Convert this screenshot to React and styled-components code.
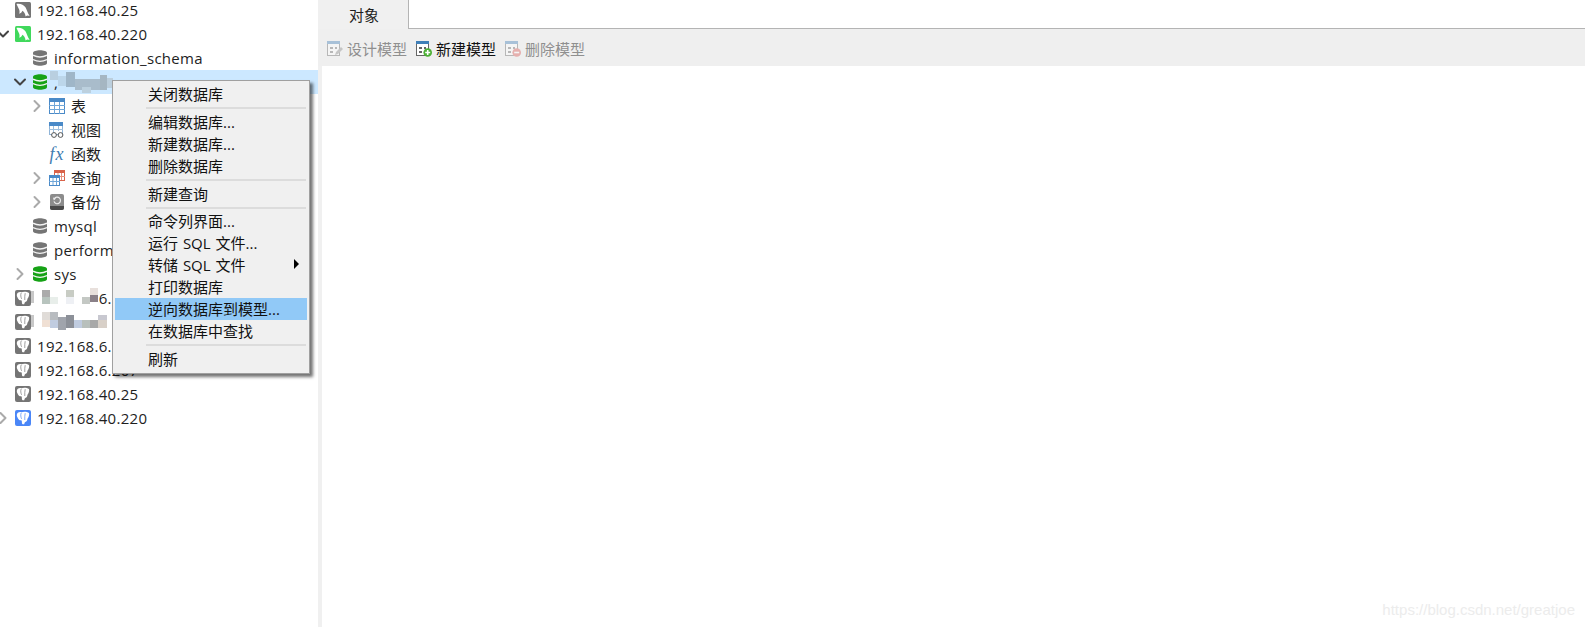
import styled, { createGlobalStyle } from "styled-components";
import { ChevronRight, ChevronDown } from "lucide-react";

const GlobalStyle = createGlobalStyle`
	html, body {
		margin: 0;
		padding: 0;
		background: #fff;
		overflow: hidden;
	}
	body {
		font-family: "Open Sans", "Noto Sans CJK SC", sans-serif;
		font-size: 15px;
		color: #1e1e1e;
	}
`;

const Page = styled.div`
	position: relative;
	display: flex;
	width: 1585px;
	height: 627px;
	overflow: hidden;
`;

const Sidebar = styled.div`
	position: relative;
	width: 318px;
	flex-shrink: 0;
	overflow: hidden;
`;

const Tree = styled.div`
	display: flex;
	flex-direction: column;
	margin-top: -2px;
`;

const Row = styled.div`
	display: flex;
	align-items: center;
	height: 24px;
	white-space: nowrap;
	background: ${(props) => (props.$selected ? "#cce8ff" : "transparent")};
`;

const ArrowSlot = styled.div`
	display: flex;
	align-items: center;
	flex-shrink: 0;
	width: ${(props) => [15, 32, 49][props.$level]}px;
	color: ${(props) => (props.$open ? "#444" : "#aaa")};

	svg {
		flex-shrink: 0;
		margin-left: ${(props) => 17 * props.$level - 7.5}px;
	}
`;

const IconBox = styled.div`
	display: flex;
	align-items: center;
	justify-content: center;
	width: 16px;
	height: 16px;
	flex-shrink: 0;
	margin-right: 6px;
`;

const Label = styled.span`
	letter-spacing: ${(props) => (props.$cjk ? 0 : 0.3)}px;
	margin-bottom: ${(props) => (props.$cjk ? 2 : 0)}px;
`;

const FxMark = styled.span`
	font-family: "Liberation Serif", serif;
	font-style: italic;
	font-size: 18px;
	line-height: 16px;
	letter-spacing: 1px;
	color: #3f7cb0;
`;

const Mosaic = styled.svg`
	position: absolute;
	left: 0;
	top: 0;
`;

const Main = styled.div`
	flex: 1;
	display: flex;
	flex-direction: column;
	background: #f0f0f0;
`;

const TabBar = styled.div`
	display: flex;
	height: 28px;
	background: #fff;
	border-bottom: 1px solid #b4b4b4;
`;

const Tab = styled.div`
	width: 91px;
	background: #f0f0f0;
	border-right: 1px solid #b4b4b4;
	margin-bottom: -1px;
	display: flex;
	align-items: center;
	justify-content: center;
	padding-left: 2px;
	box-sizing: border-box;
`;

const Toolbar = styled.div`
	display: flex;
	align-items: center;
	box-sizing: border-box;
	height: 37px;
	padding: 2px 0 0 9px;
	background: #efefef;
	gap: 9px;
`;

const ToolButton = styled.div`
	display: flex;
	align-items: center;
	gap: 4px;
	color: ${(props) => (props.$disabled ? "#8f8f8f" : "#111")};
`;

const ToolIcon = styled.svg`
	opacity: ${(props) => (props.$disabled ? 0.4 : 1)};
`;

const Content = styled.div`
	flex: 1;
	margin-left: 4px;
	background: #fff;
`;

const Menu = styled.div`
	position: absolute;
	left: 112px;
	top: 80px;
	width: 198px;
	box-sizing: border-box;
	padding: 2px 2px 3px;
	background: #f0f0f0;
	border: 1px solid #a0a0a0;
	box-shadow: 3px 3px 3px rgba(0, 0, 0, 0.55);
`;

const MenuItem = styled.div`
	position: relative;
	height: 22px;
	line-height: 22px;
	padding-left: 33px;
	white-space: nowrap;
	word-spacing: 1px;
	color: #111;
	background: ${(props) => (props.$active ? "#91c9f7" : "transparent")};
`;

const SubArrow = styled.span`
	position: absolute;
	right: 8px;
	top: 5px;
	width: 0;
	height: 0;
	border-left: 5px solid #000;
	border-top: 5px solid transparent;
	border-bottom: 5px solid transparent;
`;

const MenuSeparator = styled.div`
	height: 2px;
	margin: 2px 1px ${(props) => (props.$tight ? 1 : 2)}px 31px;
	background: #dcdcdc;
`;

const Watermark = styled.div`
	position: absolute;
	right: 10px;
	bottom: 9px;
	font-family: "Liberation Sans", sans-serif;
	font-size: 15px;
	color: #ececec;
`;

const MysqlIcon = ({ color }) => (
	<svg width="16" height="16" viewBox="0 0 16 16">
		<rect width="16" height="16" rx="1.5" fill={color} />
		<path
			d="M1.5 2C5.5 1.4 8.8 3 10.6 5.6C11.8 7.6 12.4 10.6 14.6 14C13.2 13.4 12 13.2 10.6 14.4C10.2 12 9.2 9.8 7.4 8.8C6.8 10.4 5.8 11.2 4.2 11.8C4.8 10 4.6 8.6 4 7.2C3.2 5.4 2.4 4 1.5 2Z"
			fill="#fff"
		/>
	</svg>
);

const PgIcon = ({ color }) => (
	<svg width="16" height="16" viewBox="0 0 16 16">
		<rect width="16" height="16" rx="2" fill={color} />
		<path
			d="M1.8 5C1.8 2.6 4.4 1.6 6.5 2.3C8.4 1.4 12 1.6 14 3C14.6 5.2 13.6 7.2 12.6 8.6C12.2 10 12.2 11.4 10.8 11.8C9.8 12 9.7 13 9.2 14.2C7.8 14.6 6.8 13.8 6.9 12.4C6.9 11 6.7 10.4 6.2 10.2C5 10.4 3.8 9.8 3 8.4C2.4 7.4 1.8 6.2 1.8 5Z"
			fill="#fff"
		/>
		<path d="M6.2 2.8C5.4 5 5.8 7 6.6 8.8M10.2 3.2C9.6 5.4 9.8 7.4 9.8 10" stroke={color} strokeWidth="0.7" fill="none" />
	</svg>
);

const DbIcon = ({ color }) => (
	<svg width="14" height="16" viewBox="0 0 14 16">
		<path d="M0 3C0 -0.6 14 -0.6 14 3V13C14 16.6 0 16.6 0 13Z" fill={color} />
		<path d="M0 5.2Q7 8.8 14 5.2M0 9.6Q7 13.2 14 9.6" stroke="#f4f4f4" strokeWidth="1.3" fill="none" />
	</svg>
);

const TableIcon = () => (
	<svg width="16" height="16" viewBox="0 0 16 16">
		<rect x="0.5" y="0.5" width="15" height="15" fill="#fff" stroke="#4a8ac8" />
		<rect x="0" y="0" width="16" height="4" fill="#4a8ac8" />
		<path d="M5.5 4V16M10.5 4V16M0 7.5H16M0 11.5H16" stroke="#6fa6d8" />
	</svg>
);

const ViewIcon = () => (
	<svg width="16" height="16" viewBox="0 0 16 16">
		<rect x="0.5" y="0.5" width="13" height="12" fill="#fff" stroke="#8fb4d8" />
		<rect x="0" y="0" width="14" height="4" fill="#4a8ac8" />
		<path d="M4.5 4V12M9.5 4V9M0 7.5H14" stroke="#9fc0de" />
		<circle cx="5" cy="13" r="2.4" fill="#fff" stroke="#555" />
		<circle cx="11.5" cy="13" r="2.4" fill="#fff" stroke="#555" />
	</svg>
);

const QueryIcon = () => (
	<svg width="16" height="16" viewBox="0 0 16 16">
		<rect x="5.5" y="0.5" width="10" height="10" fill="#fff" stroke="#d9634a" />
		<rect x="5" y="0" width="11" height="3" fill="#d9634a" />
		<path d="M9 3V10M12.5 3V10M6 6.5H16" stroke="#e58f7c" />
		<rect x="0.5" y="5.5" width="10" height="10" fill="#fff" stroke="#4a8ac8" />
		<rect x="0" y="5" width="11" height="3" fill="#4a8ac8" />
		<path d="M4 8V15M7.5 8V15M0 11.5H11" stroke="#6fa6d8" />
	</svg>
);

const BackupIcon = () => (
	<svg width="14" height="16" viewBox="0 0 14 16">
		<rect width="14" height="16" rx="2" fill="#8c8c8c" />
		<path d="M0 12H14V14C14 15.2 13 16 12 16H2C1 16 0 15.2 0 14Z" fill="#4a4a4a" />
		<path d="M4.4 4.6A3.3 3.3 0 1 1 4 7.4" fill="none" stroke="#eee" strokeWidth="1.2" />
		<path d="M3 3.4L6 4.4L3.8 6.4Z" fill="#eee" />
	</svg>
);

const ModelIcon = ({ disabled, badge }) => (
	<ToolIcon $disabled={disabled} width="16" height="17" viewBox="0 0 16 17">
		<rect x="0.5" y="1.5" width="12" height="14" fill="#fff" stroke="#666" />
		<rect x="0" y="1" width="13" height="3" fill="#3f7fb8" />
		<path d="M3 7H6V9H3ZM3 11H6V13H3ZM8 7H10V9H8Z" fill="#666" />
		{badge === "edit" && <path d="M8 15L9 12L14 7L16 9L11 14Z" fill="#888" />}
		{badge === "add" && (
			<>
				<circle cx="11.7" cy="12.5" r="4.3" fill="#4cb034" />
				<path d="M9.2 12.5H14.2M11.7 10V15" stroke="#fff" strokeWidth="1.6" />
			</>
		)}
		{badge === "remove" && (
			<>
				<circle cx="11.7" cy="12.5" r="4.3" fill="#d9534f" />
				<path d="M9.2 12.5H14.2" stroke="#fff" strokeWidth="1.6" />
			</>
		)}
	</ToolIcon>
);

const GREY = "#757575";
const GREEN = "#16a216";

const rows = [
	{ level: 0, icon: <MysqlIcon color={GREY} />, label: "192.168.40.25" },
	{ level: 0, open: true, icon: <MysqlIcon color="#40d85c" />, label: "192.168.40.220" },
	{ level: 1, icon: <DbIcon color={GREY} />, label: "information_schema" },
	{ level: 1, open: true, selected: true, icon: <DbIcon color={GREEN} />, label: "," },
	{ level: 2, closed: true, cjk: true, icon: <TableIcon />, label: "表" },
	{ level: 2, cjk: true, icon: <ViewIcon />, label: "视图" },
	{ level: 2, cjk: true, icon: <FxMark>fx</FxMark>, label: "函数" },
	{ level: 2, closed: true, cjk: true, icon: <QueryIcon />, label: "查询" },
	{ level: 2, closed: true, cjk: true, icon: <BackupIcon />, label: "备份" },
	{ level: 1, icon: <DbIcon color={GREY} />, label: "mysql" },
	{ level: 1, icon: <DbIcon color={GREY} />, label: "performance_schema" },
	{ level: 1, closed: true, icon: <DbIcon color={GREEN} />, label: "sys" },
	{ level: 0, icon: <PgIcon color={GREY} />, label: "192.168.6.1" },
	{ level: 0, icon: <PgIcon color={GREY} />, label: "" },
	{ level: 0, icon: <PgIcon color={GREY} />, label: "192.168.6.206" },
	{ level: 0, icon: <PgIcon color={GREY} />, label: "192.168.6.207" },
	{ level: 0, icon: <PgIcon color={GREY} />, label: "192.168.40.25" },
	{ level: 0, closed: true, icon: <PgIcon color="#4a86f7" />, label: "192.168.40.220" },
];

const menuItems = [
	{ label: "关闭数据库" },
	{ separator: true },
	{ label: "编辑数据库..." },
	{ label: "新建数据库..." },
	{ label: "删除数据库" },
	{ separator: true },
	{ label: "新建查询" },
	{ separator: true, tight: true },
	{ label: "命令列界面..." },
	{ label: "运行 SQL 文件..." },
	{ label: "转储 SQL 文件", sub: true },
	{ label: "打印数据库" },
	{ label: "逆向数据库到模型...", active: true },
	{ label: "在数据库中查找" },
	{ separator: true },
	{ label: "刷新" },
];

// 打码区域 [x, y, w, h, color]
const blurTiles = [
	[50, 71, 8, 9, "#b9cfe0"],
	[58, 76, 9, 10, "#bcd6ea"],
	[66, 72, 9, 15, "#9fb6c8"],
	[75, 79, 25, 11, "#a9bccb"],
	[82, 87, 9, 6, "#bcd0de"],
	[100, 75, 7, 15, "#a5b6c2"],
	[107, 78, 6, 10, "#bccfdd"],
	[37, 288, 62, 24, "#fff"],
	[42, 290, 8, 7, "#ababab"],
	[42, 297, 8, 7, "#b8c4be"],
	[50, 297, 8, 7, "#e8eeea"],
	[66, 290, 8, 7, "#c8ccc4"],
	[66, 297, 8, 7, "#eef0f4"],
	[82, 297, 8, 7, "#c4c8c4"],
	[90, 288, 8, 7, "#e8e0dc"],
	[90, 295, 8, 7, "#8a8088"],
	[42, 312, 8, 8, "#e0dcd8"],
	[50, 312, 8, 8, "#b8bcc0"],
	[42, 320, 8, 7, "#f0e0d4"],
	[50, 320, 8, 8, "#c0cce0"],
	[58, 317, 8, 13, "#a0a4ac"],
	[66, 315, 8, 13, "#8c9098"],
	[74, 320, 8, 8, "#c0cce0"],
	[82, 320, 8, 8, "#b8c0bc"],
	[90, 320, 8, 8, "#a8a8a8"],
	[98, 320, 9, 8, "#d8d0c8"],
	[98, 315, 9, 5, "#c8c8d0"],
	[31, 291, 3, 12, "#c8c8c8"],
	[31, 315, 3, 12, "#c8c8c8"],
];

const App = () => {
	return (
		<Page>
			<GlobalStyle />
			<Sidebar>
				<Tree>
					{rows.map((row, index) => (
						<Row key={index} $selected={row.selected}>
							<ArrowSlot $level={row.level} $open={row.open}>
								{row.open && <ChevronDown size={20} strokeWidth={2.4} />}
								{row.closed && <ChevronRight size={20} strokeWidth={2.4} />}
							</ArrowSlot>
							<IconBox>{row.icon}</IconBox>
							<Label $cjk={row.cjk}>{row.label}</Label>
						</Row>
					))}
				</Tree>
				<Mosaic width="318" height="350">
					{blurTiles.map(([x, y, w, h, fill], index) => (
						<rect key={index} x={x} y={y} width={w} height={h} fill={fill} />
					))}
				</Mosaic>
			</Sidebar>
			<Main>
				<TabBar>
					<Tab>对象</Tab>
				</TabBar>
				<Toolbar>
					<ToolButton $disabled>
						<ModelIcon disabled badge="edit" />
						设计模型
					</ToolButton>
					<ToolButton>
						<ModelIcon badge="add" />
						新建模型
					</ToolButton>
					<ToolButton $disabled>
						<ModelIcon disabled badge="remove" />
						删除模型
					</ToolButton>
				</Toolbar>
				<Content />
			</Main>
			<Menu>
				{menuItems.map((item, index) =>
					item.separator ? (
						<MenuSeparator key={index} $tight={item.tight} />
					) : (
						<MenuItem key={index} $active={item.active}>
							{item.label}
							{item.sub && <SubArrow />}
						</MenuItem>
					)
				)}
			</Menu>
			<Watermark>https://blog.csdn.net/greatjoe</Watermark>
		</Page>
	);
};

export default App;
